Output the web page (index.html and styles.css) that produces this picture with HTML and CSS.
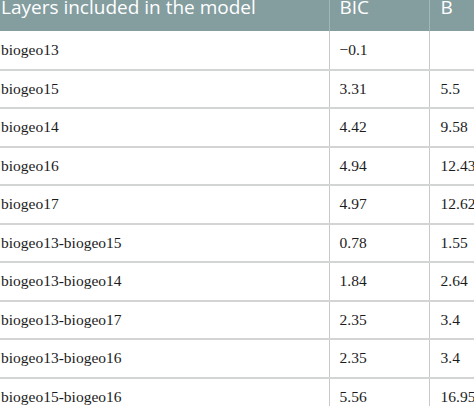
FILE: index.html
```html
<!DOCTYPE html>
<html>
<head>
<meta charset="utf-8">
<link rel="stylesheet" href="styles.css">
</head>
<body>
<table class="tbl">
  <thead>
    <tr>
      <th class="c1">Layers included in the model</th>
      <th class="c2">BIC</th>
      <th class="c3">B</th>
    </tr>
  </thead>
  <tbody>
    <tr><td class="c1">biogeo13</td><td class="c2">−0.1</td><td class="c3"></td></tr>
    <tr><td class="c1">biogeo15</td><td class="c2">3.31</td><td class="c3">5.5</td></tr>
    <tr><td class="c1">biogeo14</td><td class="c2">4.42</td><td class="c3">9.58</td></tr>
    <tr><td class="c1">biogeo16</td><td class="c2">4.94</td><td class="c3">12.43</td></tr>
    <tr><td class="c1">biogeo17</td><td class="c2">4.97</td><td class="c3">12.62</td></tr>
    <tr><td class="c1">biogeo13-biogeo15</td><td class="c2">0.78</td><td class="c3">1.55</td></tr>
    <tr><td class="c1">biogeo13-biogeo14</td><td class="c2">1.84</td><td class="c3">2.64</td></tr>
    <tr><td class="c1">biogeo13-biogeo17</td><td class="c2">2.35</td><td class="c3">3.4</td></tr>
    <tr><td class="c1">biogeo13-biogeo16</td><td class="c2">2.35</td><td class="c3">3.4</td></tr>
    <tr><td class="c1">biogeo15-biogeo16</td><td class="c2">5.56</td><td class="c3">16.95</td></tr>
  </tbody>
</table>
</body>
</html>
```

FILE: styles.css
```css
html, body {
  margin: 0;
  padding: 0;
  background: #ffffff;
  overflow: hidden;
  width: 474px;
  height: 406px;
}

.tbl {
  border-collapse: collapse;
  table-layout: fixed;
  width: 540px;
}

.tbl .c1 { width: 329px; padding-left: 1px; }
.tbl .c2 { width: 100px; padding-left: 10px; }
.tbl .c3 { width: 111px; padding-left: 11px; }

.tbl th {
  background: #849d9f;
  color: #ffffff;
  font-family: "Open Sans", "DejaVu Sans", sans-serif;
  font-weight: 400;
  font-size: 19px;
  line-height: 15px;
  height: 31px;
  padding-top: 0;
  padding-bottom: 0;
  text-align: left;
  vertical-align: top;
  box-sizing: border-box;
  border-left: 1px solid #a3b6b7;
  white-space: nowrap;
}

.tbl th.c1 { border-left: none; }

.tbl td {
  font-family: "Liberation Serif", "Times New Roman", serif;
  font-size: 15.5px;
  color: #1c1c1c;
  line-height: 20px;
  height: 38.5px;
  box-sizing: border-box;
  padding-top: 8px;
  padding-bottom: 0;
  vertical-align: top;
  text-align: left;
  border-top: 2px solid #d3d5d5;
  border-left: 1px solid #c6c9c9;
  white-space: nowrap;
}

.tbl tbody tr:first-child td { border-top: none; padding-top: 9px; }
.tbl td.c1 { border-left: none; }
```
